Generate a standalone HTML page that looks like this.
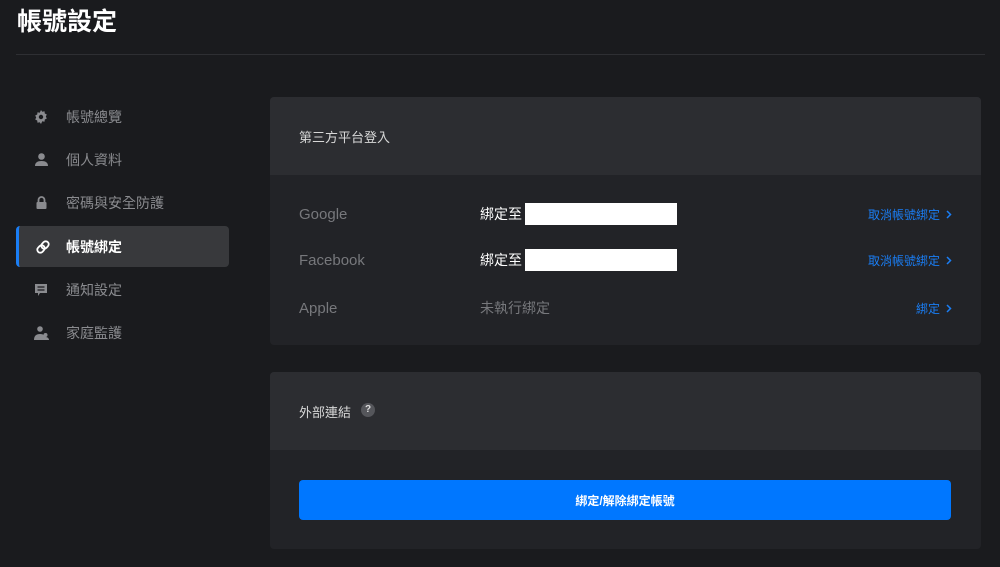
<!DOCTYPE html>
<html><head><meta charset="utf-8"><style>
*{margin:0;padding:0;box-sizing:border-box}
body{width:1000px;height:567px;background:#1a1b1e;font-family:"Liberation Sans","Noto Sans CJK TC",sans-serif;position:relative;overflow:hidden;color:#fff}
.abs{position:absolute}
h1{position:absolute;left:17px;top:6px;font-size:25px;font-weight:bold;color:#fff;line-height:32px}
.div{left:16px;top:54px;width:969px;height:1px;background:#2e2f33}
.nav{left:16px;width:213px;height:41px;display:flex;align-items:center;font-size:14px;color:#8a8b8f}
.nav .ic{width:50px;display:flex;justify-content:center}
.nav.act{background:#38393c;border-radius:4px;color:#fff;font-weight:bold;border-left:3px solid #1a7ef5}
.nav.act .ic{width:47px}
.card{left:270px;width:711px;background:#222327;border-radius:4px;overflow:hidden}
.hd{background:#2c2d31;height:78px;display:flex;align-items:center;padding-left:29px;font-size:13px;color:#d8d8d8}
.row{position:absolute;left:29px;right:29px;height:24px;display:flex;align-items:center;font-size:15px}
.row .n{width:181px;color:#77787c}
.row .v{color:#fff;display:flex;align-items:center;font-size:14px}
.wb{display:inline-block;width:152px;height:22px;background:#fff;margin-left:3px}
.lk{position:absolute;right:0;color:#1a7ef5;font-size:12px;display:flex;align-items:center}
.lk svg{margin-left:6px}
</style></head><body>
<h1>帳號設定</h1>
<div class="abs div"></div>

<div class="abs nav" style="top:96px"><div class="ic"><svg width="14" height="14" viewBox="0 0 14 14"><path d="M7 0l1.3 1.8 2.2-.5.3 2.2 2 1-1 2 1 2-2 1-.3 2.2-2.2-.5L7 14 5.7 12.2l-2.2.5-.3-2.2-2-1 1-2-1-2 2-1 .3-2.2 2.2.5z" fill="#8a8b8f"/><circle cx="7" cy="7" r="2.2" fill="#1a1b1e"/></svg></div>帳號總覽</div>
<div class="abs nav" style="top:139px"><div class="ic"><svg width="13" height="13" viewBox="0 0 13 13"><circle cx="6.5" cy="3.5" r="3.3" fill="#8a8b8f"/><path d="M0 13c0-3.5 2.5-5 6.5-5s6.5 1.5 6.5 5z" fill="#8a8b8f"/></svg></div>個人資料</div>
<div class="abs nav" style="top:182px"><div class="ic"><svg width="11" height="13" viewBox="0 0 11 13"><path d="M2.5 6V4a3 3 0 016 0v2" stroke="#8a8b8f" stroke-width="1.8" fill="none"/><rect x="0.5" y="6" width="10" height="7" rx="1" fill="#8a8b8f"/></svg></div>密碼與安全防護</div>
<div class="abs nav act" style="top:226px"><div class="ic"><svg width="14" height="14" viewBox="0 0 14 14"><g stroke="#fff" stroke-width="1.8" fill="none"><rect x="6" y="1" width="6" height="8" rx="3" transform="rotate(45 9 5)"/><rect x="2" y="5" width="6" height="8" rx="3" transform="rotate(45 5 9)"/></g></svg></div>帳號綁定</div>
<div class="abs nav" style="top:269px"><div class="ic"><svg width="14" height="14" viewBox="0 0 14 14"><path d="M1 1h12v9H6l-2 3v-3H1z" fill="#8a8b8f"/><path d="M3.5 4h7M3.5 7h7" stroke="#1a1b1e" stroke-width="1.3"/></svg></div>通知設定</div>
<div class="abs nav" style="top:312px"><div class="ic"><svg width="15" height="14" viewBox="0 0 15 14"><circle cx="6" cy="3" r="2.8" fill="#8a8b8f"/><path d="M0 14c0-4 2-6 6-6s6 2 6 6z" fill="#8a8b8f"/><circle cx="11.5" cy="9" r="2" fill="#8a8b8f"/><path d="M9 14c0-2 1-3 2.5-3s3.5 1 3.5 3z" fill="#8a8b8f"/></svg></div>家庭監護</div>

<div class="abs card" style="top:97px;height:248px">
<div class="hd">第三方平台登入</div>
<div class="row" style="top:105px"><span class="n">Google</span><span class="v">綁定至<span class="wb"></span></span><span class="lk">取消帳號綁定<svg width="6" height="9" viewBox="0 0 6 9"><path d="M1 1l3.5 3.5L1 8" stroke="#1a7ef5" stroke-width="1.5" fill="none"/></svg></span></div>
<div class="row" style="top:151px"><span class="n">Facebook</span><span class="v">綁定至<span class="wb"></span></span><span class="lk">取消帳號綁定<svg width="6" height="9" viewBox="0 0 6 9"><path d="M1 1l3.5 3.5L1 8" stroke="#1a7ef5" stroke-width="1.5" fill="none"/></svg></span></div>
<div class="row" style="top:199px"><span class="n">Apple</span><span class="v" style="color:#77787c">未執行綁定</span><span class="lk">綁定<svg width="6" height="9" viewBox="0 0 6 9"><path d="M1 1l3.5 3.5L1 8" stroke="#1a7ef5" stroke-width="1.5" fill="none"/></svg></span></div>
</div>

<div class="abs card" style="top:372px;height:177px">
<div class="hd">外部連結<span style="display:inline-block;width:14px;height:14px;border-radius:50%;background:#55565b;color:#ddd;font-size:10px;font-weight:bold;text-align:center;line-height:14px;margin-left:10px;margin-top:-2px">?</span></div>
<div class="abs" style="left:29px;top:108px;width:652px;height:40px;background:#0077ff;border-radius:4px;display:flex;align-items:center;justify-content:center;font-size:12px;font-weight:bold;color:#fff">綁定/解除綁定帳號</div>
</div>
</body></html>
